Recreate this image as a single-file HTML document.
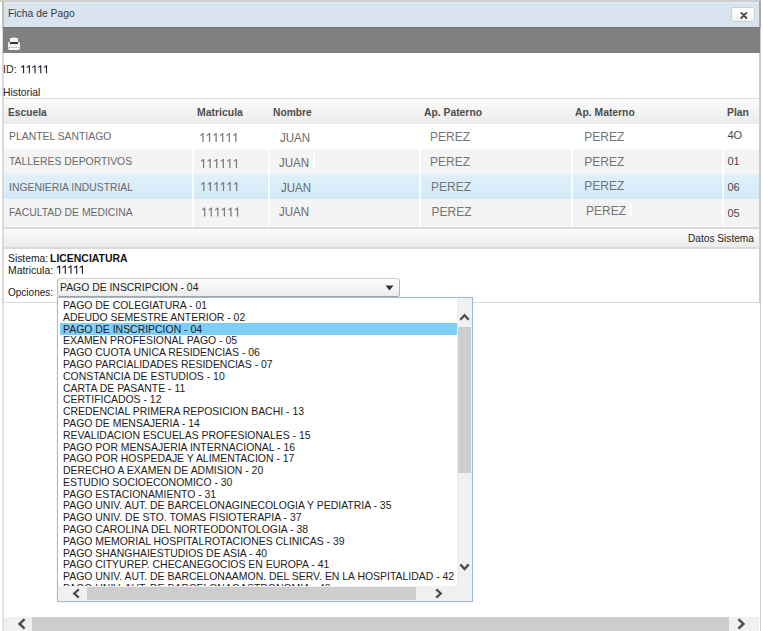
<!DOCTYPE html>
<html><head><meta charset="utf-8"><style>
html,body{margin:0;padding:0;}
body{width:763px;height:631px;position:relative;overflow:hidden;background:#fff;font-family:"Liberation Sans",sans-serif;}
div{position:absolute;box-sizing:border-box;}
.t{white-space:pre;line-height:14px;transform-origin:0 0;}
</style></head><body>
<div style="left:0;top:0;width:761px;height:2px;background:#cdcdcd"></div>
<div style="left:2px;top:1px;width:2px;height:302px;background:#dadada"></div>
<div style="left:759px;top:1px;width:2px;height:302px;background:#cdcdcd"></div>
<div style="left:2px;top:303px;width:2px;height:328px;background:#e2e2e2"></div>
<div style="left:760px;top:303px;width:1px;height:328px;background:#d2d2d2"></div>
<div style="left:2px;top:1px;width:2px;height:27px;background:#bdbdbd"></div>
<div style="left:759px;top:1px;width:2px;height:27px;background:#a9a9a9"></div>
<div style="left:4px;top:2px;width:755px;height:25px;background:#d9e4ee;border-top:1px solid #e4edf6"></div>
<div class="t" style="left:7.57px;top:5.69px;font-size:11px;transform:scaleX(0.94);color:#3a3a44;font-weight:normal;">Ficha de Pago</div>
<div style="left:731px;top:7px;width:24px;height:15px;border:1px solid #cfcfcf;border-radius:3px;background:linear-gradient(#fff,#f2f2f2)"></div>
<svg style="position:absolute;left:738.8px;top:10.8px" width="10" height="9" viewBox="0 0 10 9"><path d="M2.3 1.9 L7.4 7 M7.4 1.9 L2.3 7" stroke="#464646" stroke-width="1.8" stroke-linecap="round"/></svg>
<div style="left:3px;top:27px;width:757px;height:26px;background:#808080;border-top:1px solid #767676"></div>
<div style="left:12px;top:37px;width:4px;height:2px;border-radius:2px 2px 0 0;background:#a6cfea"></div>
<div style="left:10px;top:38px;width:8px;height:5px;background:#f2f2f2"></div>
<div style="left:8px;top:42px;width:12px;height:8px;background:linear-gradient(#e4e4e4,#f6f6f6 40%,#eeeeee 58%,#c6c6c6 68%,#f7f7f7 80%);border-radius:1px 1px 2px 2px"></div>
<div style="left:10px;top:42px;width:8px;height:2px;background:#363636"></div>
<div class="t" style="left:2.74px;top:62.49px;font-size:11px;transform:scaleX(0.97);color:#2a2a2a;font-weight:normal;">ID:</div>
<svg style="position:absolute;left:0;top:0;overflow:visible" width="1" height="1"><path d="M23.05 73.20 L23.05 66.80 L20.85 68.10 L20.85 66.90 L23.35 65.20 L24.15 65.20 L24.15 73.20 Z M28.77 73.20 L28.77 66.80 L26.57 68.10 L26.57 66.90 L29.07 65.20 L29.87 65.20 L29.87 73.20 Z M34.49 73.20 L34.49 66.80 L32.29 68.10 L32.29 66.90 L34.79 65.20 L35.59 65.20 L35.59 73.20 Z M40.21 73.20 L40.21 66.80 L38.01 68.10 L38.01 66.90 L40.51 65.20 L41.31 65.20 L41.31 73.20 Z M45.93 73.20 L45.93 66.80 L43.73 68.10 L43.73 66.90 L46.23 65.20 L47.03 65.20 L47.03 73.20 Z" fill="#1a1a2a"/></svg>
<div class="t" style="left:2.87px;top:85.19px;font-size:11px;transform:scaleX(0.94);color:#222;font-weight:normal;">Historial</div>
<div style="left:4px;top:98px;width:755px;height:1px;background:#dcdcdc"></div>
<div style="left:4px;top:99px;width:755px;height:25px;background:linear-gradient(#fcfcfc,#ebebeb)"></div>
<div style="left:4px;top:124px;width:755px;height:25px;background:#fff"></div>
<div style="left:4px;top:149px;width:755px;height:25px;background:#f4f4f4"></div>
<div style="left:4px;top:174px;width:755px;height:25px;background:linear-gradient(#e0f0fa,#d3eaf8)"></div>
<div style="left:4px;top:199px;width:755px;height:28px;background:#f4f4f4"></div>
<div style="left:192px;top:149px;width:2px;height:78px;background:#fff;opacity:.85"></div>
<div style="left:268px;top:149px;width:2px;height:78px;background:#fff;opacity:.85"></div>
<div style="left:419px;top:149px;width:2px;height:78px;background:#fff;opacity:.85"></div>
<div style="left:571px;top:149px;width:2px;height:78px;background:#fff;opacity:.85"></div>
<div style="left:722px;top:149px;width:2px;height:78px;background:#fff;opacity:.85"></div>
<div style="left:4px;top:227px;width:755px;height:2px;background:#d9d9d9"></div>
<div class="t" style="left:7.88px;top:104.79px;font-size:11px;transform:scaleX(0.93);color:#4d4d4d;font-weight:bold;">Escuela</div>
<div class="t" style="left:196.56px;top:104.69px;font-size:11px;transform:scaleX(0.95);color:#4d4d4d;font-weight:bold;">Matricula</div>
<div class="t" style="left:273.08px;top:104.69px;font-size:11px;transform:scaleX(0.93);color:#4d4d4d;font-weight:bold;">Nombre</div>
<div class="t" style="left:423.77px;top:104.69px;font-size:11px;transform:scaleX(0.94);color:#4d4d4d;font-weight:bold;">Ap. Paterno</div>
<div class="t" style="left:575.37px;top:104.69px;font-size:11px;transform:scaleX(0.94);color:#4d4d4d;font-weight:bold;">Ap. Materno</div>
<div class="t" style="left:726.87px;top:104.79px;font-size:11px;transform:scaleX(0.94);color:#4d4d4d;font-weight:bold;">Plan</div>
<div class="t" style="left:8.57px;top:129.02px;font-size:11.5px;transform:scaleX(0.903);color:#6a6a6a;font-weight:normal;">PLANTEL SANTIAGO</div>
<svg style="position:absolute;left:0;top:0;overflow:visible" width="1" height="1"><path d="M202.38 142.10 L202.38 134.81 L200.28 136.20 L200.28 135.00 L202.68 133.10 L203.62 133.10 L203.62 142.10 Z M208.94 142.10 L208.94 134.81 L206.84 136.20 L206.84 135.00 L209.25 133.10 L210.19 133.10 L210.19 142.10 Z M215.51 142.10 L215.51 134.81 L213.41 136.20 L213.41 135.00 L215.81 133.10 L216.76 133.10 L216.76 142.10 Z M222.09 142.10 L222.09 134.81 L219.99 136.20 L219.99 135.00 L222.39 133.10 L223.34 133.10 L223.34 142.10 Z M228.66 142.10 L228.66 134.81 L226.56 136.20 L226.56 135.00 L228.96 133.10 L229.91 133.10 L229.91 142.10 Z M235.22 142.10 L235.22 134.81 L233.12 136.20 L233.12 135.00 L235.53 133.10 L236.47 133.10 L236.47 142.10 Z" fill="#7a7a7a"/></svg>
<div class="t" style="left:280.26px;top:131.14px;font-size:12px;transform:scaleX(0.96);color:#6a6a6a;font-weight:normal;">JUAN</div>
<div class="t" style="left:430.12px;top:129.64px;font-size:12px;transform:scaleX(1.0);color:#747474;font-weight:normal;">PEREZ</div>
<div class="t" style="left:584.22px;top:129.64px;font-size:12px;transform:scaleX(1.0);color:#747474;font-weight:normal;">PEREZ</div>
<div class="t" style="left:727.51px;top:128.49px;font-size:11px;transform:scaleX(1.0);color:#4a4a4a;font-weight:normal;">4O</div>
<div class="t" style="left:8.57px;top:154.02px;font-size:11.5px;transform:scaleX(0.903);color:#6a6a6a;font-weight:normal;">TALLERES DEPORTIVOS</div>
<svg style="position:absolute;left:0;top:0;overflow:visible" width="1" height="1"><path d="M202.97 167.90 L202.97 160.61 L200.88 162.00 L200.88 160.80 L203.28 158.90 L204.22 158.90 L204.22 167.90 Z M209.54 167.90 L209.54 160.61 L207.44 162.00 L207.44 160.80 L209.84 158.90 L210.79 158.90 L210.79 167.90 Z M216.12 167.90 L216.12 160.61 L214.02 162.00 L214.02 160.80 L216.42 158.90 L217.37 158.90 L217.37 167.90 Z M222.69 167.90 L222.69 160.61 L220.59 162.00 L220.59 160.80 L222.99 158.90 L223.94 158.90 L223.94 167.90 Z M229.25 167.90 L229.25 160.61 L227.16 162.00 L227.16 160.80 L229.56 158.90 L230.50 158.90 L230.50 167.90 Z M235.82 167.90 L235.82 160.61 L233.72 162.00 L233.72 160.80 L236.12 158.90 L237.07 158.90 L237.07 167.90 Z" fill="#7a7a7a"/></svg>
<div class="t" style="left:279.26px;top:155.84px;font-size:12px;transform:scaleX(0.96);color:#6a6a6a;font-weight:normal;">JUAN</div>
<div class="t" style="left:430.12px;top:155.14px;font-size:12px;transform:scaleX(1.0);color:#747474;font-weight:normal;">PEREZ</div>
<div class="t" style="left:584.22px;top:155.14px;font-size:12px;transform:scaleX(1.0);color:#747474;font-weight:normal;">PEREZ</div>
<div class="t" style="left:727.51px;top:154.19px;font-size:11px;transform:scaleX(1.0);color:#4a4a4a;font-weight:normal;">01</div>
<div class="t" style="left:8.57px;top:179.52px;font-size:11.5px;transform:scaleX(0.903);color:#6a6a6a;font-weight:normal;">INGENIERIA INDUSTRIAL</div>
<svg style="position:absolute;left:0;top:0;overflow:visible" width="1" height="1"><path d="M203.18 191.10 L203.18 183.81 L201.08 185.20 L201.08 184.00 L203.48 182.10 L204.43 182.10 L204.43 191.10 Z M209.75 191.10 L209.75 183.81 L207.65 185.20 L207.65 184.00 L210.05 182.10 L211.00 182.10 L211.00 191.10 Z M216.31 191.10 L216.31 183.81 L214.22 185.20 L214.22 184.00 L216.62 182.10 L217.56 182.10 L217.56 191.10 Z M222.89 191.10 L222.89 183.81 L220.79 185.20 L220.79 184.00 L223.19 182.10 L224.14 182.10 L224.14 191.10 Z M229.46 191.10 L229.46 183.81 L227.36 185.20 L227.36 184.00 L229.76 182.10 L230.71 182.10 L230.71 191.10 Z M236.03 191.10 L236.03 183.81 L233.93 185.20 L233.93 184.00 L236.33 182.10 L237.28 182.10 L237.28 191.10 Z" fill="#7a7a7a"/></svg>
<div class="t" style="left:281.26px;top:180.64px;font-size:12px;transform:scaleX(0.96);color:#6a6a6a;font-weight:normal;">JUAN</div>
<div class="t" style="left:431.12px;top:180.04px;font-size:12px;transform:scaleX(1.0);color:#747474;font-weight:normal;">PEREZ</div>
<div class="t" style="left:584.22px;top:179.24px;font-size:12px;transform:scaleX(1.0);color:#747474;font-weight:normal;">PEREZ</div>
<div class="t" style="left:727.51px;top:179.99px;font-size:11px;transform:scaleX(1.0);color:#4a4a4a;font-weight:normal;">06</div>
<div class="t" style="left:8.57px;top:205.02px;font-size:11.5px;transform:scaleX(0.903);color:#6a6a6a;font-weight:normal;">FACULTAD DE MEDICINA</div>
<svg style="position:absolute;left:0;top:0;overflow:visible" width="1" height="1"><path d="M204.07 216.60 L204.07 209.31 L201.97 210.70 L201.97 209.50 L204.38 207.60 L205.32 207.60 L205.32 216.60 Z M210.64 216.60 L210.64 209.31 L208.54 210.70 L208.54 209.50 L210.94 207.60 L211.89 207.60 L211.89 216.60 Z M217.21 216.60 L217.21 209.31 L215.11 210.70 L215.11 209.50 L217.51 207.60 L218.46 207.60 L218.46 216.60 Z M223.78 216.60 L223.78 209.31 L221.69 210.70 L221.69 209.50 L224.09 207.60 L225.03 207.60 L225.03 216.60 Z M230.35 216.60 L230.35 209.31 L228.25 210.70 L228.25 209.50 L230.66 207.60 L231.60 207.60 L231.60 216.60 Z M236.92 216.60 L236.92 209.31 L234.82 210.70 L234.82 209.50 L237.22 207.60 L238.17 207.60 L238.17 216.60 Z" fill="#7a7a7a"/></svg>
<div class="t" style="left:279.26px;top:205.34px;font-size:12px;transform:scaleX(0.96);color:#6a6a6a;font-weight:normal;">JUAN</div>
<div class="t" style="left:431.62px;top:205.04px;font-size:12px;transform:scaleX(1.0);color:#747474;font-weight:normal;">PEREZ</div>
<div class="t" style="left:586.12px;top:204.14px;font-size:12px;transform:scaleX(1.0);color:#747474;font-weight:normal;">PEREZ</div>
<div class="t" style="left:727.51px;top:205.69px;font-size:11px;transform:scaleX(1.0);color:#4a4a4a;font-weight:normal;">05</div>
<div style="left:313px;top:154px;width:2px;height:14px;background:#fff"></div>
<div style="left:630px;top:204px;width:2px;height:12px;background:#fff"></div>
<div style="left:4px;top:229px;width:755px;height:18px;background:linear-gradient(#fbfbfb,#ececec)"></div>
<div style="left:4px;top:247px;width:755px;height:2px;background:#dadada"></div>
<div class="t" style="left:688.29px;top:230.69px;font-size:11px;transform:scaleX(0.922);color:#262626;font-weight:normal;">Datos Sistema</div>
<div style="left:4px;top:302px;width:755px;height:1px;background:#dcdcdc"></div>
<div class="t" style="left:7.87px;top:251.09px;font-size:11px;transform:scaleX(0.94);color:#202020;font-weight:normal;">Sistema: </div>
<div class="t" style="left:50.46px;top:251.09px;font-size:11px;transform:scaleX(0.95);color:#111;font-weight:bold;">LICENCIATURA</div>
<div class="t" style="left:7.86px;top:262.79px;font-size:11px;transform:scaleX(0.946);color:#202020;font-weight:normal;">Matricula:</div>
<svg style="position:absolute;left:0;top:0;overflow:visible" width="1" height="1"><path d="M59.05 273.80 L59.05 267.00 L56.85 268.30 L56.85 267.10 L59.35 265.40 L60.15 265.40 L60.15 273.80 Z M64.75 273.80 L64.75 267.00 L62.55 268.30 L62.55 267.10 L65.05 265.40 L65.85 265.40 L65.85 273.80 Z M70.45 273.80 L70.45 267.00 L68.25 268.30 L68.25 267.10 L70.75 265.40 L71.55 265.40 L71.55 273.80 Z M76.15 273.80 L76.15 267.00 L73.95 268.30 L73.95 267.10 L76.45 265.40 L77.25 265.40 L77.25 273.80 Z M81.85 273.80 L81.85 267.00 L79.65 268.30 L79.65 267.10 L82.15 265.40 L82.95 265.40 L82.95 273.80 Z" fill="#1a1a2a"/></svg>
<div class="t" style="left:7.90px;top:284.69px;font-size:11px;transform:scaleX(0.91);color:#202020;font-weight:normal;">Opciones:</div>
<div style="left:57px;top:278px;width:343px;height:19px;border:1px solid #b6b6b6;border-top-color:#d2d2d2;border-bottom-color:#a9a9a9;border-radius:3px;background:linear-gradient(#fdfdfd,#ededed)"></div>
<div class="t" style="left:60.06px;top:279.79px;font-size:11px;transform:scaleX(0.945);color:#222;font-weight:normal;">PAGO DE INSCRIPCION - 04</div>
<svg style="position:absolute;left:385px;top:285px" width="9" height="6" viewBox="0 0 9 6"><path d="M0.5 0.5 L8.5 0.5 L4.5 5.5 Z" fill="#333"/></svg>
<div style="left:57px;top:297px;width:416px;height:305px;border:1px solid #a3b8cc;background:#fff;box-shadow:0 0 3px rgba(0,0,0,.07)"></div>
<div style="left:58px;top:298px;width:399px;height:288px;overflow:hidden">
<div class="t" style="left:5.26px;top:0.02px;font-size:11.5px;transform:scaleX(0.908);color:#1c1c1c;font-weight:normal;">PAGO DE COLEGIATURA - 01</div>
<div class="t" style="left:5.26px;top:11.81px;font-size:11.5px;transform:scaleX(0.908);color:#1c1c1c;font-weight:normal;">ADEUDO SEMESTRE ANTERIOR - 02</div>
<div style="left:2px;top:24.68px;width:397px;height:12px;background:#80cdf7"></div>
<div class="t" style="left:5.26px;top:23.60px;font-size:11.5px;transform:scaleX(0.908);color:#1c1c1c;font-weight:normal;">PAGO DE INSCRIPCION - 04</div>
<div class="t" style="left:5.26px;top:35.39px;font-size:11.5px;transform:scaleX(0.908);color:#1c1c1c;font-weight:normal;">EXAMEN PROFESIONAL PAGO - 05</div>
<div class="t" style="left:5.26px;top:47.18px;font-size:11.5px;transform:scaleX(0.908);color:#1c1c1c;font-weight:normal;">PAGO CUOTA UNICA RESIDENCIAS - 06</div>
<div class="t" style="left:5.26px;top:58.97px;font-size:11.5px;transform:scaleX(0.908);color:#1c1c1c;font-weight:normal;">PAGO PARCIALIDADES RESIDENCIAS - 07</div>
<div class="t" style="left:5.26px;top:70.76px;font-size:11.5px;transform:scaleX(0.908);color:#1c1c1c;font-weight:normal;">CONSTANCIA DE ESTUDIOS - 10</div>
<div class="t" style="left:5.26px;top:82.55px;font-size:11.5px;transform:scaleX(0.908);color:#1c1c1c;font-weight:normal;">CARTA DE PASANTE - 11</div>
<div class="t" style="left:5.26px;top:94.34px;font-size:11.5px;transform:scaleX(0.908);color:#1c1c1c;font-weight:normal;">CERTIFICADOS - 12</div>
<div class="t" style="left:5.26px;top:106.13px;font-size:11.5px;transform:scaleX(0.908);color:#1c1c1c;font-weight:normal;">CREDENCIAL PRIMERA REPOSICION BACHI - 13</div>
<div class="t" style="left:5.26px;top:117.92px;font-size:11.5px;transform:scaleX(0.908);color:#1c1c1c;font-weight:normal;">PAGO DE MENSAJERIA - 14</div>
<div class="t" style="left:5.26px;top:129.71px;font-size:11.5px;transform:scaleX(0.908);color:#1c1c1c;font-weight:normal;">REVALIDACION ESCUELAS PROFESIONALES - 15</div>
<div class="t" style="left:5.26px;top:141.50px;font-size:11.5px;transform:scaleX(0.908);color:#1c1c1c;font-weight:normal;">PAGO POR MENSAJERIA INTERNACIONAL - 16</div>
<div class="t" style="left:5.26px;top:153.29px;font-size:11.5px;transform:scaleX(0.908);color:#1c1c1c;font-weight:normal;">PAGO POR HOSPEDAJE Y ALIMENTACION - 17</div>
<div class="t" style="left:5.26px;top:165.08px;font-size:11.5px;transform:scaleX(0.908);color:#1c1c1c;font-weight:normal;">DERECHO A EXAMEN DE ADMISION - 20</div>
<div class="t" style="left:5.26px;top:176.87px;font-size:11.5px;transform:scaleX(0.908);color:#1c1c1c;font-weight:normal;">ESTUDIO SOCIOECONOMICO - 30</div>
<div class="t" style="left:5.26px;top:188.66px;font-size:11.5px;transform:scaleX(0.908);color:#1c1c1c;font-weight:normal;">PAGO ESTACIONAMIENTO - 31</div>
<div class="t" style="left:5.26px;top:200.45px;font-size:11.5px;transform:scaleX(0.908);color:#1c1c1c;font-weight:normal;">PAGO UNIV. AUT. DE BARCELONAGINECOLOGIA Y PEDIATRIA - 35</div>
<div class="t" style="left:5.26px;top:212.24px;font-size:11.5px;transform:scaleX(0.908);color:#1c1c1c;font-weight:normal;">PAGO UNIV. DE STO. TOMAS FISIOTERAPIA - 37</div>
<div class="t" style="left:5.26px;top:224.03px;font-size:11.5px;transform:scaleX(0.908);color:#1c1c1c;font-weight:normal;">PAGO CAROLINA DEL NORTEODONTOLOGIA - 38</div>
<div class="t" style="left:5.26px;top:235.82px;font-size:11.5px;transform:scaleX(0.908);color:#1c1c1c;font-weight:normal;">PAGO MEMORIAL HOSPITALROTACIONES CLINICAS - 39</div>
<div class="t" style="left:5.26px;top:247.61px;font-size:11.5px;transform:scaleX(0.908);color:#1c1c1c;font-weight:normal;">PAGO SHANGHAIESTUDIOS DE ASIA - 40</div>
<div class="t" style="left:5.26px;top:259.40px;font-size:11.5px;transform:scaleX(0.908);color:#1c1c1c;font-weight:normal;">PAGO CITYUREP. CHECANEGOCIOS EN EUROPA - 41</div>
<div class="t" style="left:5.26px;top:271.19px;font-size:11.5px;transform:scaleX(0.908);color:#1c1c1c;font-weight:normal;">PAGO UNIV. AUT. DE BARCELONAAMON. DEL SERV. EN LA HOSPITALIDAD - 42</div>
<div class="t" style="left:5.26px;top:282.98px;font-size:11.5px;transform:scaleX(0.908);color:#1c1c1c;font-weight:normal;">PAGO UNIV. AUT. DE BARCELONAGASTRONOMIA - 43</div>
</div>
<div style="left:457px;top:298px;width:15px;height:288px;background:#f0f0f0"></div>
<div style="left:458px;top:327px;width:13px;height:146px;background:#cdcdcd"></div>
<svg style="position:absolute;left:459px;top:312px" width="11" height="10" viewBox="0 0 11 10"><path d="M1.3 7.8 L5.5 3.2 L9.7 7.8" fill="none" stroke="#4e4e4e" stroke-width="2.3"/></svg>
<svg style="position:absolute;left:459px;top:562px" width="11" height="10" viewBox="0 0 11 10"><path d="M1.3 2.4 L5.5 7 L9.7 2.4" fill="none" stroke="#4e4e4e" stroke-width="2.3"/></svg>
<div style="left:58px;top:586px;width:414px;height:15px;background:#f0f0f0"></div>
<div style="left:87px;top:587px;width:329px;height:13px;background:#cdcdcd"></div>
<svg style="position:absolute;left:71px;top:588px" width="10" height="11" viewBox="0 0 10 11"><path d="M7.8 1.3 L3.2 5.5 L7.8 9.7" fill="none" stroke="#4e4e4e" stroke-width="2.3"/></svg>
<svg style="position:absolute;left:434px;top:588px" width="10" height="11" viewBox="0 0 10 11"><path d="M2.2 1.3 L6.8 5.5 L2.2 9.7" fill="none" stroke="#4e4e4e" stroke-width="2.3"/></svg>
<div style="left:4px;top:617px;width:755px;height:14px;background:#f0f0f0"></div>
<div style="left:32px;top:617px;width:697px;height:14px;background:#cdcdcd"></div>
<svg style="position:absolute;left:16px;top:618px" width="11" height="12" viewBox="0 0 11 12"><path d="M8.6 1.2 L3.6 5.9 L8.6 10.6" fill="none" stroke="#4e4e4e" stroke-width="2.5"/></svg>
<svg style="position:absolute;left:736px;top:618px" width="11" height="12" viewBox="0 0 11 12"><path d="M2.4 1.2 L7.4 5.9 L2.4 10.6" fill="none" stroke="#4e4e4e" stroke-width="2.5"/></svg>
</body></html>
